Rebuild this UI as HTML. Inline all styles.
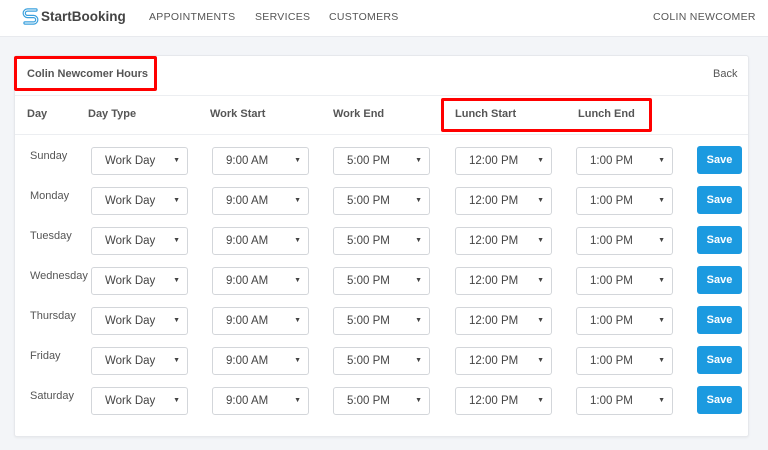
<!DOCTYPE html>
<html><head><style>
*{margin:0;padding:0;box-sizing:border-box}
body{width:768px;height:450px;background:#f3f5f8;font-family:"Liberation Sans",sans-serif;position:relative;overflow:hidden}
.nav{position:absolute;left:0;top:0;width:768px;height:37px;background:#fff;border-bottom:1px solid #e8eaee}
.nav span{position:absolute;top:11px;font-size:10.5px;color:#555;white-space:nowrap;letter-spacing:0.3px}
.logo{position:absolute;left:22px;top:7px}
.card{position:absolute;left:14px;top:55px;width:735px;height:382px;background:#fff;border:1px solid #e6e8ec;border-radius:3px;box-shadow:0 1px 2px rgba(0,0,0,.05)}
.t{position:absolute;font-size:11px;color:#555;font-weight:bold;white-space:nowrap}
.hr{position:absolute;left:15px;width:733px;height:1px;background:#eceef1}
.sel{position:absolute;width:97px;height:28px;border:1px solid #d3d6da;border-radius:3px;background:#fff;font-size:11.5px;color:#444;padding:7px 0 0 13px}
.sel:after{content:"▼";position:absolute;right:7px;top:9px;font-size:7px;color:#444}
.save{position:absolute;left:697px;width:45px;height:28px;background:#1b9ae0;border-radius:3px;color:#fff;font-size:11px;font-weight:bold;text-align:center;line-height:28px}
.day{position:absolute;left:30px;font-size:11px;color:#555}
.red{position:absolute;border:3px solid #f00;border-radius:2px}
</style></head><body>
<div class="nav">
<svg class="logo" width="17" height="21" viewBox="0 0 17 21"><path d="M14 3H5.5a3.2 3.2 0 0 0 0 6.5h6a3.2 3.2 0 0 1 0 6.5H3" fill="none" stroke="#3aa0dd" stroke-width="3.4" stroke-linecap="round"/><path d="M14 3H5.5a3.2 3.2 0 0 0 0 6.5h6a3.2 3.2 0 0 1 0 6.5H3" fill="none" stroke="#fff" stroke-width="1" stroke-linecap="round"/></svg>
<span style="left:41px;top:9px;font-size:13.5px;color:#444;font-weight:bold;letter-spacing:0">StartBooking</span>
<span style="left:149px">APPOINTMENTS</span>
<span style="left:255px">SERVICES</span>
<span style="left:329px">CUSTOMERS</span>
<span style="left:653px">COLIN NEWCOMER</span>
</div>
<div class="card"></div>
<div class="t" style="left:27px;top:68px">Colin Newcomer Hours</div>
<div class="t" style="left:713px;top:68px;font-weight:normal">Back</div>
<div class="hr" style="top:95px"></div>
<div class="t" style="left:27px;top:108px">Day</div>
<div class="t" style="left:88px;top:108px">Day Type</div>
<div class="t" style="left:210px;top:108px">Work Start</div>
<div class="t" style="left:333px;top:108px">Work End</div>
<div class="t" style="left:455px;top:108px">Lunch Start</div>
<div class="t" style="left:578px;top:108px">Lunch End</div>
<div class="hr" style="top:134px"></div>
<div class="red" style="left:14px;top:56px;width:143px;height:35px"></div>
<div class="red" style="left:441px;top:98px;width:211px;height:34px"></div>
<div id="rows"></div>
<script>
var days=["Sunday","Monday","Tuesday","Wednesday","Thursday","Friday","Saturday"],h="";
days.forEach(function(d,i){var y=147+i*40;
h+='<div class="day" style="top:'+(y+3)+'px">'+d+'</div>'+
'<div class="sel" style="left:91px;top:'+y+'px">Work Day</div>'+
'<div class="sel" style="left:212px;top:'+y+'px">9:00 AM</div>'+
'<div class="sel" style="left:333px;top:'+y+'px">5:00 PM</div>'+
'<div class="sel" style="left:455px;top:'+y+'px">12:00 PM</div>'+
'<div class="sel" style="left:576px;top:'+y+'px">1:00 PM</div>'+
'<div class="save" style="top:'+(y-1)+'px">Save</div>';});
document.getElementById("rows").innerHTML=h;
</script>
</body></html>
